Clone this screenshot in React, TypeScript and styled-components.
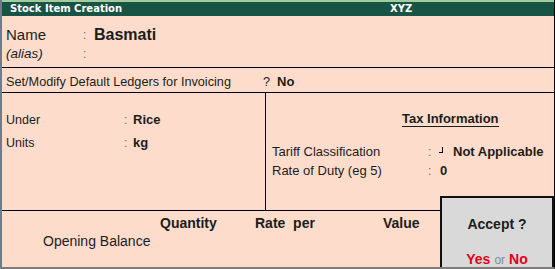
import styled, { createGlobalStyle } from 'styled-components';

const GlobalStyle = createGlobalStyle`
  html, body {
    margin: 0;
    padding: 0;
    background: #ffffff;
  }
  * {
    box-sizing: border-box;
  }
`;

const peach = '#fddccb';
const ink = '#1c1c1c';

const Frame = styled.div`
  position: relative;
  width: 555px;
  height: 269px;
  display: flex;
  flex-direction: column;
  background: ${peach};
  border-left: 2px solid #6f7c8c;
  border-bottom: 2px solid #7d7d7d;
  border-right: 1px solid #000;
  font-family: 'Liberation Sans', Arial, sans-serif;
  color: ${ink};
  overflow: hidden;
`;

const TopStrip = styled.div`
  height: 2px;
  background: #a3cc9e;
`;

const TitleBar = styled.div`
  height: 14px;
  display: grid;
  grid-template-columns: 388px 1fr;
  align-items: center;
  background: #185446;
  color: #ffffff;
  font-family: 'DejaVu Sans', Verdana, sans-serif;
  font-weight: bold;
  font-size: 10px;
  line-height: 14px;

  .title {
    padding-left: 8px;
  }
`;

const NameBlock = styled.div`
  height: 52px;
  padding: 9px 0 0 4px;
  border-bottom: 1px solid #000;
`;

interface FieldProps {
  $label: number;
  $colon: number;
  $height: number;
}

const Field = styled.div<FieldProps>`
  display: grid;
  grid-template-columns: ${(p) => p.$label}px ${(p) => p.$colon}px 1fr;
  align-items: center;
  height: ${(p) => p.$height}px;
  white-space: nowrap;
`;

const Label = styled.span<{ $size?: number; $italic?: boolean }>`
  font-size: ${(p) => p.$size ?? 12}px;
  font-style: ${(p) => (p.$italic ? 'italic' : 'normal')};
`;

const Colon = styled.span`
  font-size: 12px;
  color: #6a6a6a;
`;

const Value = styled.span<{ $size?: number }>`
  font-size: ${(p) => p.$size ?? 13}px;
  font-weight: bold;
`;

const LedgerRow = styled.div`
  height: 25px;
  display: grid;
  grid-template-columns: 257px 14px 1fr;
  align-items: center;
  padding: 3px 0 0 4px;
  border-bottom: 1px solid #000;
  font-size: 12.7px;
  white-space: nowrap;
`;

const Middle = styled.div`
  height: 118px;
  display: grid;
  grid-template-columns: 264px 1fr;
  border-bottom: 1px solid #000;
`;

const LeftPanel = styled.div`
  border-right: 1px solid #000;
  padding: 15px 0 0 4px;
`;

const RightPanel = styled.div`
  padding: 18px 0 0 6px;
  display: flex;
  flex-direction: column;
`;

const SectionTitle = styled.div`
  margin-left: 130px;
  align-self: flex-start;
  font-size: 13px;
  font-weight: bold;
  line-height: 15px;
  border-bottom: 1px solid #1c1c1c;
  margin-bottom: 15px;
`;

const Corner = styled.span`
  display: inline-block;
  width: 4px;
  height: 6px;
  margin: 0 10px 6px 1px;
  border-right: 1px solid #000;
  border-bottom: 1px solid #000;
  vertical-align: middle;
`;

const Bottom = styled.div`
  flex: 1;
  display: grid;
  grid-template-columns: 158px 95px 128px 1fr;
  grid-template-rows: 21px 16px;
  align-items: center;
  padding-top: 1px;
  white-space: pre;
`;

const ColHead = styled.span`
  font-size: 14px;
  font-weight: bold;
`;

const RowLabel = styled.span`
  grid-column: 1 / span 2;
  padding-left: 41px;
  font-size: 14px;
`;

const AcceptBox = styled.div`
  position: absolute;
  left: 438px;
  top: 196px;
  right: 0;
  height: 73px;
  background: #d9d9d9;
  border: 2px solid #111;
  display: flex;
  flex-direction: column;
  align-items: center;
  padding-top: 18px;
  font-weight: bold;
  font-size: 14px;

  .question {
    height: 16px;
    line-height: 16px;
  }
`;

const Choice = styled.div`
  margin-top: 19px;
  font-size: 14px;
  line-height: 16px;
`;

const Red = styled.span`
  color: #e3001b;
  font-weight: bold;
`;

const Or = styled.span`
  color: #8a8a8a;
  font-weight: normal;
  font-size: 12px;
  margin: 0 4px;
`;

export default function App() {
  return (
    <>
      <GlobalStyle />
      <Frame>
        <TopStrip />
        <TitleBar>
          <span className="title">Stock Item Creation</span>
          <span>XYZ</span>
        </TitleBar>

        <NameBlock>
          <Field $label={77} $colon={11} $height={19}>
            <Label $size={15}>Name</Label>
            <Colon>:</Colon>
            <Value $size={16}>Basmati</Value>
          </Field>
          <Field $label={77} $colon={11} $height={19}>
            <Label $size={13.5} $italic>
              (alias)
            </Label>
            <Colon>:</Colon>
            <span />
          </Field>
        </NameBlock>

        <LedgerRow>
          <span>Set/Modify Default Ledgers for Invoicing</span>
          <span>?</span>
          <Value>No</Value>
        </LedgerRow>

        <Middle>
          <LeftPanel>
            <Field $label={118} $colon={9} $height={23}>
              <Label $size={12.5}>Under</Label>
              <Colon>:</Colon>
              <Value>Rice</Value>
            </Field>
            <Field $label={118} $colon={9} $height={23}>
              <Label $size={12.5}>Units</Label>
              <Colon>:</Colon>
              <Value>kg</Value>
            </Field>
          </LeftPanel>
          <RightPanel>
            <SectionTitle>Tax Information</SectionTitle>
            <Field $label={156} $colon={10} $height={19}>
              <Label $size={13}>Tariff Classification</Label>
              <Colon>:</Colon>
              <Value>
                <Corner />
                Not Applicable
              </Value>
            </Field>
            <Field $label={156} $colon={12} $height={19}>
              <Label $size={13}>Rate of Duty (eg 5)</Label>
              <Colon>:</Colon>
              <Value>0</Value>
            </Field>
          </RightPanel>
        </Middle>

        <Bottom>
          <span />
          <ColHead>Quantity</ColHead>
          <ColHead>Rate  per</ColHead>
          <ColHead>Value</ColHead>
          <RowLabel>Opening Balance</RowLabel>
        </Bottom>

        <AcceptBox>
          <span className="question">Accept ?</span>
          <Choice>
            <Red>Yes</Red>
            <Or>or</Or>
            <Red>No</Red>
          </Choice>
        </AcceptBox>
      </Frame>
    </>
  );
}
